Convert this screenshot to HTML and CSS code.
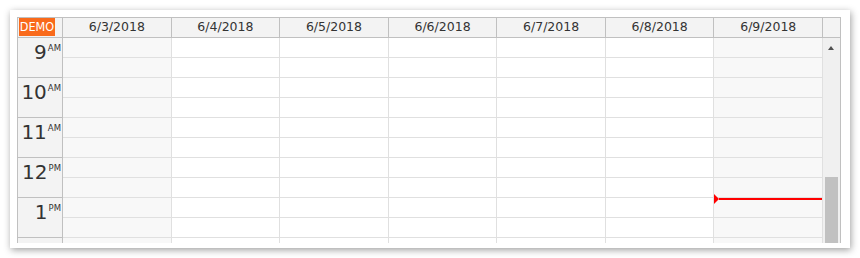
FILE: index.html
```html
<!DOCTYPE html>
<html>
<head>
<meta charset="utf-8">
<link rel="stylesheet" href="styles.css">
</head>
<body>
<div class="frame">
  <div class="cal">
    <div class="head">
      <div class="corner"><span class="demo">DEMO</span></div>
      <div class="hcell">6/3/2018</div>
      <div class="hcell">6/4/2018</div>
      <div class="hcell">6/5/2018</div>
      <div class="hcell">6/6/2018</div>
      <div class="hcell">6/7/2018</div>
      <div class="hcell">6/8/2018</div>
      <div class="hcell">6/9/2018</div>
      <div class="hscroll"></div>
    </div>
    <div class="body">
      <div class="rowhead">
        <div class="hour"><span class="num">9</span><span class="ampm">AM</span></div>
        <div class="hour"><span class="num">10</span><span class="ampm">AM</span></div>
        <div class="hour"><span class="num">11</span><span class="ampm">AM</span></div>
        <div class="hour"><span class="num">12</span><span class="ampm">PM</span></div>
        <div class="hour"><span class="num">1</span><span class="ampm">PM</span></div>
        <div class="hour"></div>
      </div>
      <div class="days">
        <div class="day weekend">
          <div class="slot"></div><div class="slot"></div><div class="slot"></div><div class="slot"></div>
          <div class="slot"></div><div class="slot"></div><div class="slot"></div><div class="slot"></div>
          <div class="slot"></div><div class="slot"></div><div class="slot"></div><div class="slot"></div>
        </div>
        <div class="day">
          <div class="slot"></div><div class="slot"></div><div class="slot"></div><div class="slot"></div>
          <div class="slot"></div><div class="slot"></div><div class="slot"></div><div class="slot"></div>
          <div class="slot"></div><div class="slot"></div><div class="slot"></div><div class="slot"></div>
        </div>
        <div class="day">
          <div class="slot"></div><div class="slot"></div><div class="slot"></div><div class="slot"></div>
          <div class="slot"></div><div class="slot"></div><div class="slot"></div><div class="slot"></div>
          <div class="slot"></div><div class="slot"></div><div class="slot"></div><div class="slot"></div>
        </div>
        <div class="day">
          <div class="slot"></div><div class="slot"></div><div class="slot"></div><div class="slot"></div>
          <div class="slot"></div><div class="slot"></div><div class="slot"></div><div class="slot"></div>
          <div class="slot"></div><div class="slot"></div><div class="slot"></div><div class="slot"></div>
        </div>
        <div class="day">
          <div class="slot"></div><div class="slot"></div><div class="slot"></div><div class="slot"></div>
          <div class="slot"></div><div class="slot"></div><div class="slot"></div><div class="slot"></div>
          <div class="slot"></div><div class="slot"></div><div class="slot"></div><div class="slot"></div>
        </div>
        <div class="day">
          <div class="slot"></div><div class="slot"></div><div class="slot"></div><div class="slot"></div>
          <div class="slot"></div><div class="slot"></div><div class="slot"></div><div class="slot"></div>
          <div class="slot"></div><div class="slot"></div><div class="slot"></div><div class="slot"></div>
        </div>
        <div class="day weekend">
          <div class="slot"></div><div class="slot"></div><div class="slot"></div><div class="slot"></div>
          <div class="slot"></div><div class="slot"></div><div class="slot"></div><div class="slot"></div>
          <div class="slot"></div><div class="slot"></div><div class="slot"></div><div class="slot"></div>
          <div class="now"><span class="now-tri"></span><span class="now-line"></span></div>
        </div>
      </div>
      <div class="scroll">
        <span class="arrow"></span>
        <span class="thumb"></span>
      </div>
    </div>
  </div>
</div>
</body>
</html>
```
FILE: styles.css
```css
html, body {
  margin: 0;
  padding: 0;
  background: #ffffff;
}
body {
  padding: 10px;
  font-family: "DejaVu Sans", sans-serif;
  color: #333333;
}
.frame {
  width: 840px;
  height: 238px;
  box-sizing: border-box;
  padding: 7px;
  background: #ffffff;
  box-shadow: 1px 2px 7px rgba(0, 0, 0, 0.38);
}
.cal {
  width: 824px;
  box-sizing: border-box;
  border: 1px solid #c0c0c0;
  border-bottom: none;
}
.head {
  display: flex;
  height: 20px;
  box-sizing: border-box;
  border-bottom: 1px solid #c0c0c0;
  background: #f3f3f3;
}
.corner {
  width: 45px;
  box-sizing: border-box;
  border-right: 1px solid #c0c0c0;
  padding-left: 1px;
}
.demo {
  display: block;
  width: 36px;
  height: 18px;
  background: #f96a1b;
  color: #ffffff;
  font-family: "DejaVu Sans Condensed", "DejaVu Sans", sans-serif;
  font-size: 12.5px;
  line-height: 18px;
  text-align: center;
}
.hcell {
  flex: 1;
  border-right: 1px solid #c0c0c0;
  text-align: center;
  font-size: 12.5px;
  line-height: 18px;
  color: #333333;
}
.hscroll {
  width: 17px;
}
.body {
  display: flex;
  height: 205px;
  overflow: hidden;
}
.rowhead {
  width: 45px;
  flex: none;
  box-sizing: border-box;
  border-right: 1px solid #c0c0c0;
  background: #f3f3f3;
}
.hour {
  height: 40px;
  box-sizing: border-box;
  border-bottom: 1px solid #c0c0c0;
  display: flex;
  justify-content: flex-end;
  align-items: flex-start;
  padding-top: 4px;
  padding-right: 1px;
}
.num {
  font-size: 20px;
  line-height: 20px;
  color: #333333;
}
.ampm {
  font-size: 8.5px;
  line-height: 8.5px;
  margin-top: 2px;
  margin-left: 1px;
  color: #333333;
}
.days {
  width: 760px;
  flex: none;
  display: flex;
}
.day {
  flex: 1;
  position: relative;
  border-right: 1px solid #e0e0e0;
  background: #ffffff;
}
.day.weekend {
  background: #f8f8f8;
}
.slot {
  height: 20px;
  box-sizing: border-box;
  border-bottom: 1px solid #e0e0e0;
}
.now {
  position: absolute;
  top: 156px;
  left: 0;
  right: 0;
  height: 10px;
  display: flex;
  align-items: center;
}
.now-tri {
  width: 0;
  height: 0;
  border-left: 5px solid #ff0000;
  border-top: 5px solid transparent;
  border-bottom: 5px solid transparent;
}
.now-line {
  flex: 1;
  height: 2px;
  background: #ff0000;
}
.scroll {
  width: 17px;
  flex: none;
  background: #f0f0f0;
  display: flex;
  flex-direction: column;
  align-items: flex-start;
  padding-top: 8px;
  box-sizing: border-box;
}
.arrow {
  width: 0;
  height: 0;
  margin-left: 5px;
  border-left: 3.5px solid transparent;
  border-right: 3.5px solid transparent;
  border-bottom: 4px solid #505050;
}
.thumb {
  width: 13px;
  height: 80px;
  margin-left: 2px;
  margin-top: 127px;
  background: #c1c1c1;
}
```
